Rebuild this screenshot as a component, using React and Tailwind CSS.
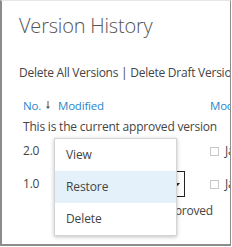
import React from 'react';

const font = { fontFamily: '"Open Sans", "Noto Sans", sans-serif' };

const menuItems = [
  { text: 'View', active: false },
  { text: 'Restore', active: true },
  { text: 'Delete', active: false },
];

const Checkbox = () => (
  <span className="inline-block w-[9px] h-[9px] border border-[#c8c8c8] bg-white shrink-0" />
);

export default function App() {
  return (
    <div className="w-[232px] h-[247px] bg-white" style={font}>
      <div className="relative w-[231px] h-[246px] border-l-2 border-r border-b-2 border-[#8c8c8c] border-t border-t-[#e6e6e6] overflow-hidden text-[#444]">
        <div className="pl-[17px] pt-[11px]">
          {/* Title */}
          <h1 className="text-[20px] leading-[28px] font-light text-[#555] tracking-[-0.2px]">Version History</h1>

          {/* Actions */}
          <div className="mt-[25px] text-[12px] leading-[16px] tracking-[-0.25px] whitespace-nowrap text-[#444]">
            Delete All Versions | Delete Draft Versions
          </div>

          {/* Table */}
          <div className="mt-[16px] pl-[4px] text-[12px] tracking-[-0.2px] whitespace-nowrap">
            <div className="grid grid-cols-[35px_152px_60px] h-[18px] items-center text-[#2a86cc] text-[11.5px]">
              <span className="flex items-center gap-[4px]">
                No.
                <svg width="6" height="9" viewBox="0 0 6 9" className="mt-[-1px]">
                  <path d="M3 0v7" stroke="#555" strokeWidth="1" />
                  <path d="M1 5.5l2 2.5 2-2.5z" fill="#555" />
                </svg>
              </span>
              <span>Modified</span>
              <span>Modified By</span>
            </div>

            <div className="mt-[2px] h-[20px] leading-[20px]">This is the current approved version</div>

            <div className="grid grid-cols-[35px_152px_60px] h-[28px] items-center">
              <span>2.0</span>
              <span />
              <span className="flex items-center gap-[6px]"><Checkbox />Jane</span>
            </div>

            <div className="grid grid-cols-[35px_152px_60px] mt-[6px]">
              <span className="leading-[26px]">1.0</span>
              <div className="flex flex-col items-end pr-[25px]">
                <div className="h-[26px] w-[60px] border border-[#222] flex items-center justify-end pr-[4px]">
                  <svg width="5" height="3" viewBox="0 0 5 3"><path d="M0 0h5L2.5 3z" fill="#222" /></svg>
                </div>
                <span className="mr-[-28px] leading-[18px] mt-[5px]">Approved</span>
              </div>
              <span className="flex items-center gap-[6px] h-[26px]"><Checkbox />Jane</span>
            </div>
          </div>
        </div>

        {/* Context menu */}
        <ul className="absolute left-[52px] top-[137px] w-[123px] bg-white border border-[#d4d4d4] shadow-[0_1px_4px_rgba(0,0,0,0.25)] text-[12px] tracking-[-0.1px] text-[#444]">
          {menuItems.map((item) => (
            <li
              key={item.text}
              className={`h-[32px] flex items-center pl-[11px] ${item.active ? 'bg-[#e5f1fa]' : ''}`}
            >
              {item.text}
            </li>
          ))}
        </ul>
      </div>
    </div>
  );
}
